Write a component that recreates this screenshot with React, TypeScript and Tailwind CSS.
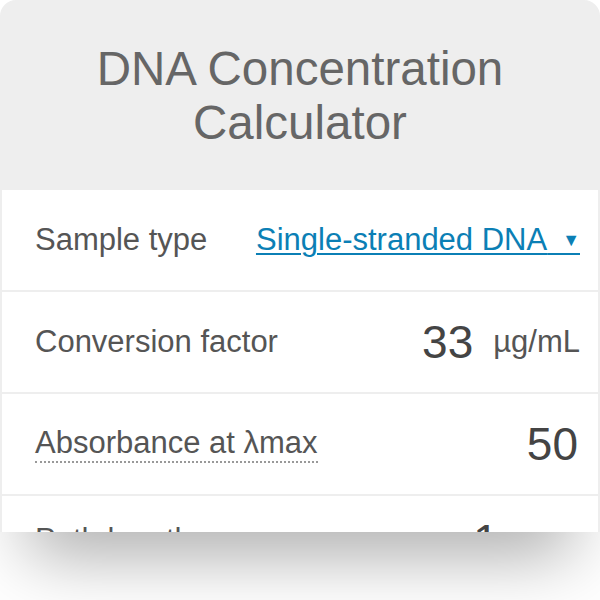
import React from "react";

const font = { fontFamily: '"Liberation Sans", Arial, sans-serif' };

function Row({ children, className = "" }: { children: React.ReactNode; className?: string }) {
  return (
    <div className={`flex h-[100px] shrink-0 items-center justify-between bg-white pl-[33px] pr-[18px] ${className}`}>
      {children}
    </div>
  );
}

export default function App() {
  return (
    <div className="h-[600px] w-[600px] overflow-hidden bg-white" style={font}>
      <div className="flex h-[532px] flex-col overflow-hidden rounded-t-[16px] border-x-2 border-t border-[#eeeeee] bg-[#eeeeee]">
        <div className="flex h-[189px] shrink-0 items-center justify-center">
          <h1 className="text-center text-[47.5px] leading-[54px] font-normal text-[#666666]">
            DNA Concentration
            <br />
            Calculator
          </h1>
        </div>
        <div className="flex flex-col gap-[2px]">
          <Row>
            <span className="text-[31px] text-[#555555]">Sample type</span>
            <span className="text-[31px] leading-[36px] text-[#0b7fb5] underline decoration-2 underline-offset-[3px]">
              Single-stranded DNA
              <span className="text-[18px] align-[4px]">{"\u00a0\u00a0\u00a0▼"}</span>
            </span>
          </Row>
          <Row>
            <span className="text-[31px] text-[#555555]">Conversion factor</span>
            <span className="flex items-center">
              <span className="text-[46px] leading-[52px] text-[#444444]">33</span>
              <span className="ml-[20px] text-[31px] text-[#555555]">µg/mL</span>
            </span>
          </Row>
          <Row>
            <span className="border-b-2 border-dotted border-[#999999] text-[31px] leading-[36px] text-[#555555]">
              Absorbance at λmax
            </span>
            <span className="pr-[2px] text-[46px] leading-[52px] text-[#444444]">50</span>
          </Row>
          <Row className="pb-[10px]">
            <span className="border-b-2 border-dotted border-[#999999] text-[31px] leading-[36px] text-[#555555]">
              Path length
            </span>
            <span className="flex items-center">
              <span className="text-[46px] leading-[52px] text-[#444444]">1</span>
              <span className="ml-[40px] text-[31px] text-[#555555]">cm</span>
            </span>
          </Row>
        </div>
      </div>
      <div className="h-[68px] overflow-hidden bg-white">
        <div className="mx-[50px] -mt-[40px] h-[40px] shadow-[0_0_70px_22px_rgba(0,0,0,0.34)]" />
      </div>
    </div>
  );
}
